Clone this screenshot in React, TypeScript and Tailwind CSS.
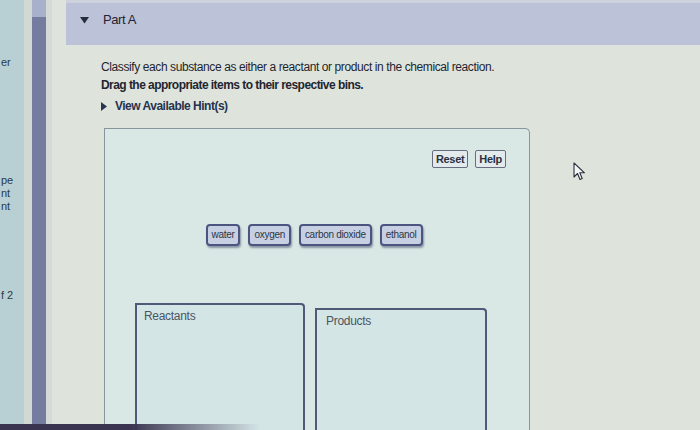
import React from "react";

function Cursor() {
  return (
    <svg width="14" height="20" viewBox="0 0 14 20" className="absolute left-[573px] top-[162px]">
      <path d="M1 1 L1 15 L4.5 11.5 L7 17.5 L9.2 16.5 L6.8 10.8 L11.5 10.8 Z" fill="#f4f6f4" stroke="#2a3040" strokeWidth="1.1" strokeLinejoin="round" />
    </svg>
  );
}

export default function App() {
  return (
    <div className="relative w-[700px] h-[430px] overflow-hidden flex bg-[#dee4dc] font-['Liberation_Sans',Arial,sans-serif]">
      {/* left strip with visible text fragments */}
      <div className="w-[24px] shrink-0 bg-[#b8d0d4] text-[11px] leading-[13px] text-[#2c3a44]">
        <div className="flex flex-col items-start pl-[1px]">
          <div className="mt-[56px]">er</div>
          <div className="mt-[105px]">pe</div>
          <div>nt</div>
          <div>nt</div>
          <div className="mt-[76px]">f 2</div>
        </div>
      </div>
      <div className="w-[8px] shrink-0 bg-[#d2d9d5]" />
      <div className="w-[14px] shrink-0 flex flex-col">
        <div className="h-[17px] bg-[#a9b0cc]" />
        <div className="flex-1 bg-[#767c9f]" />
      </div>
      <div className="w-[6px] shrink-0 bg-[#d4dbd6]" />

      {/* main */}
      <div className="flex-1 flex flex-col min-w-0">
        <div className="flex h-[48px] shrink-0">
          <div className="w-[14px] shrink-0" />
          <div className="flex-1 flex flex-col">
            <div className="h-[3px] bg-[#cdd2dc]" />
            <div className="h-[42px] bg-[#bcc3d9] flex items-center pl-[14px] pb-[8px]">
              <svg width="9" height="7" viewBox="0 0 9 7"><path d="M0 0 L9 0 L4.5 6.5 Z" fill="#262c3c" /></svg>
              <span className="ml-[14px] text-[13px] font-medium text-[#1f2432] tracking-[-0.4px]">Part A</span>
            </div>
          </div>
        </div>

        <div className="pl-[49px] pt-[10px] text-[12px] leading-[18px] text-[#1f2430] tracking-[-0.4px]">
          <p>Classify each substance as either a reactant or product in the chemical reaction.</p>
          <p className="font-bold tracking-[-0.55px]">Drag the appropriate items to their respective bins.</p>
          <p className="mt-[3px] flex items-center font-bold text-[#27324e] tracking-[-0.5px]">
            <svg width="6" height="9" viewBox="0 0 6 9" className="mr-[8px]"><path d="M0 0 L6 4.5 L0 9 Z" fill="#2b3552" /></svg>
            View Available Hint(s)
          </p>
        </div>

        <div className="ml-[52px] mt-[13px] w-[426px] flex-1 border border-b-0 border-[#8a949b] rounded-tr-[5px] bg-[#d9e8e4] flex flex-col">
          <div className="flex justify-end gap-[7px] pr-[23px] pt-[21px]">
            <button className="h-[18px] px-[3px] border border-[#676d7e] rounded-[2px] bg-[#e2eaeb] text-[11px] font-bold text-[#2a3040] tracking-[-0.3px] leading-none">Reset</button>
            <button className="h-[18px] px-[3px] border border-[#676d7e] rounded-[2px] bg-[#e2eaeb] text-[11px] font-bold text-[#2a3040] tracking-[-0.3px] leading-none">Help</button>
          </div>
          <div className="mt-[56px] flex justify-center gap-[8px] pr-[6px]">
            {["water", "oxygen", "carbon dioxide", "ethanol"].map((t) => (
              <div key={t} className="h-[22px] px-[4px] pb-[2px] flex items-center border-2 border-[#4b5580] rounded-[4px] bg-[#c6d0e2] shadow-[1px_2px_2px_rgba(40,50,90,0.45)] text-[10px] text-[#2d3548] tracking-[-0.3px]">
                {t}
              </div>
            ))}
          </div>
          <div className="mt-[57px] flex-1 flex gap-[10px] pl-[30px]">
            <div className="w-[170px] border-2 border-b-0 border-[#505978] rounded-tr-[4px] bg-[#d4e5e6] pl-[7px] pt-[2px] text-[12px] text-[#4a5562] tracking-[-0.3px]">Reactants</div>
            <div className="w-[172px] mt-[5px] border-2 border-b-0 border-[#505978] rounded-tr-[4px] bg-[#d4e5e6] pl-[9px] pt-[2px] text-[12px] text-[#4a5562] tracking-[-0.3px]">Products</div>
          </div>
        </div>
      </div>

      <Cursor />
      <div className="absolute bottom-0 left-0 w-[260px] h-[6px] bg-gradient-to-r from-[#3a3450] via-[#3a3450] to-transparent" />
    </div>
  );
}
